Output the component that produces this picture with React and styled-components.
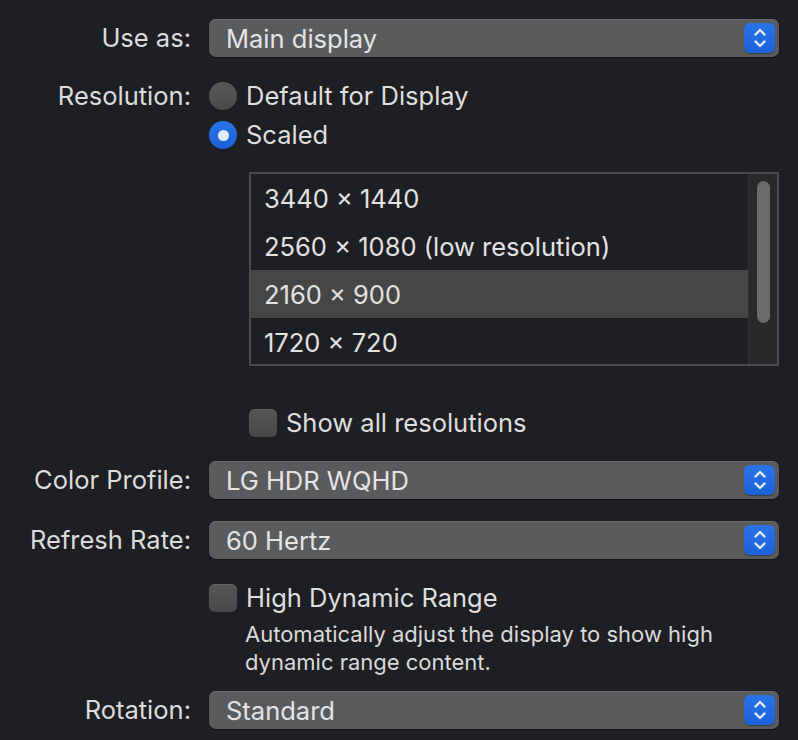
import styled, { createGlobalStyle } from "styled-components";

const GlobalStyle = createGlobalStyle`
  html, body {
    margin: 0;
    background: #1e1f22;
  }
  body {
    font-family: Inter, "Noto Sans", sans-serif;
    color: #dedede;
    -webkit-font-smoothing: antialiased;
  }
`;

const Page = styled.div`
  width: 798px;
  height: 740px;
  box-sizing: border-box;
  padding: 19px 19px 0 0;
  display: flex;
  flex-direction: column;
`;

const Row = styled.div`
  display: grid;
  grid-template-columns: 191px 1fr;
  column-gap: 18px;
  align-items: ${(p) => (p.$top ? "start" : "center")};
  margin-top: ${(p) => p.$mt || 0}px;
`;

const Label = styled.div`
  text-align: right;
  font-size: 25.5px;
  line-height: 28px;
  white-space: nowrap;
  color: #dcdcdc;
`;

const Controls = styled.div`
  display: flex;
  flex-direction: column;
`;

const PopupBox = styled.div`
  height: 38px;
  box-sizing: border-box;
  border-radius: 7px;
  background: #5a5b5d;
  box-shadow: inset 0 1px 0 #6a6b6d, 0 0.5px 1px rgba(0, 0, 0, 0.4);
  display: flex;
  align-items: center;
  justify-content: space-between;
  padding: 0 4px 0 17px;
  font-size: 25.5px;
  color: #e4e4e4;
`;

const Stepper = styled.div`
  width: 31px;
  height: 30px;
  border-radius: 6px;
  background: linear-gradient(#2a73e8, #1b62d8);
  box-shadow: 0 1px 1px rgba(0, 0, 0, 0.35);
  display: flex;
  align-items: center;
  justify-content: center;
`;

const Popup = ({ value }) => (
  <PopupBox>
    <span>{value}</span>
    <Stepper>
      <svg width="14" height="22" viewBox="0 0 14 22" fill="none">
        <path
          d="M2.5 7.5 L7 3 L11.5 7.5 M2.5 14.5 L7 19 L11.5 14.5"
          stroke="#e3ebfb"
          strokeWidth="2.4"
          strokeLinecap="round"
          strokeLinejoin="round"
        />
      </svg>
    </Stepper>
  </PopupBox>
);

const Option = styled.div`
  display: flex;
  align-items: center;
  gap: 9px;
  height: 28px;
  font-size: 25.5px;
  line-height: 28px;
  white-space: nowrap;
  margin-top: ${(p) => p.$mt || 0}px;
  margin-left: ${(p) => p.$indent || 0}px;
  color: #dedede;
`;

const Radio = styled.span`
  width: 28px;
  height: 28px;
  border-radius: 50%;
  flex-shrink: 0;
  box-sizing: border-box;
  background: ${(p) =>
    p.$checked
      ? "linear-gradient(#2a73e8, #1b62d8)"
      : "linear-gradient(#585858, #4a4a4a)"};
  display: flex;
  align-items: center;
  justify-content: center;

  &::after {
    content: "";
    display: ${(p) => (p.$checked ? "block" : "none")};
    width: 11px;
    height: 11px;
    border-radius: 50%;
    background: #e4ecfb;
  }
`;

const Checkbox = styled.span`
  width: 28px;
  height: 28px;
  border-radius: 6px;
  flex-shrink: 0;
  background: linear-gradient(#565657, #48484a);
  box-shadow: inset 0 1px 0 #626262;
`;

const List = styled.div`
  margin: 23px 0 0 40px;
  height: 194px;
  box-sizing: border-box;
  border: 2px solid #4b4b4d;
  display: flex;
  background: #1e1f22;
`;

const Rows = styled.div`
  flex: 1;
  display: flex;
  flex-direction: column;
`;

const ListRow = styled.div`
  height: 48px;
  flex-shrink: 0;
  display: flex;
  align-items: center;
  padding-left: 13px;
  font-size: 25.5px;
  color: #e2e2e2;
  background: ${(p) => (p.$selected ? "#464646" : "transparent")};
`;

const Track = styled.div`
  width: 29px;
  background: #29292b;
  border-left: 1px solid #333335;
  box-sizing: border-box;
  padding: 7px 0 0 8px;
`;

const Thumb = styled.div`
  width: 13px;
  height: 142px;
  border-radius: 7px;
  background: #6b6b6b;
`;

const Hint = styled.p`
  margin: 8px 0 0 36px;
  font-size: 22px;
  line-height: 28px;
  color: #dadada;
  white-space: nowrap;
`;

const resolutions = [
  "3440 × 1440",
  "2560 × 1080 (low resolution)",
  "2160 × 900",
  "1720 × 720",
];

export default function App() {
  return (
    <>
      <GlobalStyle />
      <Page>
        <Row>
          <Label>Use as:</Label>
          <Popup value="Main display" />
        </Row>

        <Row $top $mt={25}>
          <Label>Resolution:</Label>
          <Controls>
            <Option>
              <Radio />
              Default for Display
            </Option>
            <Option $mt={11}>
              <Radio $checked />
              Scaled
            </Option>
            <List>
              <Rows>
                {resolutions.map((r) => (
                  <ListRow key={r} $selected={r === "2160 × 900"}>
                    {r}
                  </ListRow>
                ))}
              </Rows>
              <Track>
                <Thumb />
              </Track>
            </List>
            <Option $mt={43} $indent={40}>
              <Checkbox />
              Show all resolutions
            </Option>
          </Controls>
        </Row>

        <Row $mt={24}>
          <Label>Color Profile:</Label>
          <Popup value="LG HDR WQHD" />
        </Row>

        <Row $mt={22}>
          <Label>Refresh Rate:</Label>
          <Popup value="60 Hertz" />
        </Row>

        <Row $mt={25}>
          <div />
          <Controls>
            <Option>
              <Checkbox />
              High Dynamic Range
            </Option>
            <Hint>
              Automatically adjust the display to show high
              <br />
              dynamic range content.
            </Hint>
          </Controls>
        </Row>

        <Row $mt={15}>
          <Label>Rotation:</Label>
          <Popup value="Standard" />
        </Row>
      </Page>
    </>
  );
}
